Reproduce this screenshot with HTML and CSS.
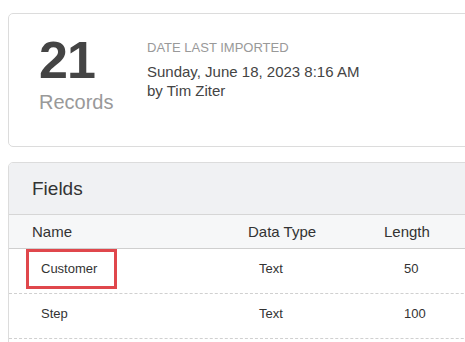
FILE: index.html
```html
<!DOCTYPE html>
<html lang="en">
<head>
    <meta charset="UTF-8">
    <meta name="viewport" content="width=device-width, initial-scale=1.0">
    <title>Data Source Details</title>
    <link rel="stylesheet" href="styles.css">
</head>
<body>

    <div class="card summary-card">
        <div class="stats">
            <div class="stats-count">21</div>
            <div class="stats-label">Records</div>
        </div>
        <div class="import-info">
            <div class="import-title">DATE LAST IMPORTED</div>
            <div class="import-date">Sunday, June 18, 2023 8:16 AM</div>
            <div class="import-user">by Tim Ziter</div>
        </div>
    </div>

    <div class="card fields-card">
        <div class="card-header">Fields</div>
        <div class="fields-row fields-head">
            <div class="col-name">Name</div>
            <div class="col-type">Data Type</div>
            <div class="col-length">Length</div>
        </div>
        <div class="fields-row">
            <div class="col-name cell"><span class="highlight">Customer</span></div>
            <div class="col-type cell">Text</div>
            <div class="col-length cell">50</div>
        </div>
        <div class="fields-row">
            <div class="col-name cell">Step</div>
            <div class="col-type cell">Text</div>
            <div class="col-length cell">100</div>
        </div>
    </div>

</body>
</html>
```

FILE: styles.css
```css
html, body {
    overflow: hidden;
}
body {
    font-family: "Liberation Sans", Arial, sans-serif;
    margin: 13px 0 0 8px;
    background: #fff;
    color: #333;
}
.card {
    width: 520px;
    border: 1px solid #dcdcdc;
    border-radius: 5px;
    background: #fff;
}
.summary-card {
    display: grid;
    grid-template-columns: 108px 1fr;
    padding: 20px 30px 32px;
}
.stats-count {
    font-size: 52px;
    font-weight: bold;
    line-height: 52px;
    color: #444;
    letter-spacing: -1px;
}
.stats-label {
    margin-top: 4px;
    font-size: 20px;
    line-height: 24px;
    color: #999;
}
.import-info {
    padding-top: 6px;
}
.import-title {
    font-size: 13px;
    line-height: 16px;
    color: #999;
}
.import-date {
    margin-top: 6px;
    font-size: 15px;
    line-height: 19px;
    color: #444;
}
.import-user {
    font-size: 15px;
    line-height: 19px;
    color: #444;
}
.fields-card {
    margin-top: 15px;
    min-height: 240px;
    overflow: hidden;
}
.card-header {
    background: #f0f1f3;
    border-bottom: 1px solid #d6d6d6;
    padding: 14px 23px;
    font-size: 19px;
    line-height: 23px;
    color: #333;
}
.fields-row {
    display: grid;
    grid-template-columns: 216px 136px 1fr;
    padding-left: 23px;
    border-bottom: 1px dashed #d0d0d0;
}
.fields-head {
    background: #f6f7f8;
    border-bottom: 1px solid #cfcfcf;
    font-size: 15px;
    line-height: 33px;
    color: #333;
}
.cell {
    font-size: 13px;
    line-height: 39px;
    height: 44px;
    color: #333;
}
.col-name.cell {
    padding-left: 9px;
}
.col-type.cell {
    padding-left: 11px;
}
.col-length.cell {
    padding-left: 20px;
}
.highlight {
    display: inline-block;
    box-sizing: border-box;
    width: 91px;
    height: 40px;
    margin-left: -15px;
    padding-left: 12px;
    border: 3px solid #e0474c;
    line-height: 34px;
}
```
